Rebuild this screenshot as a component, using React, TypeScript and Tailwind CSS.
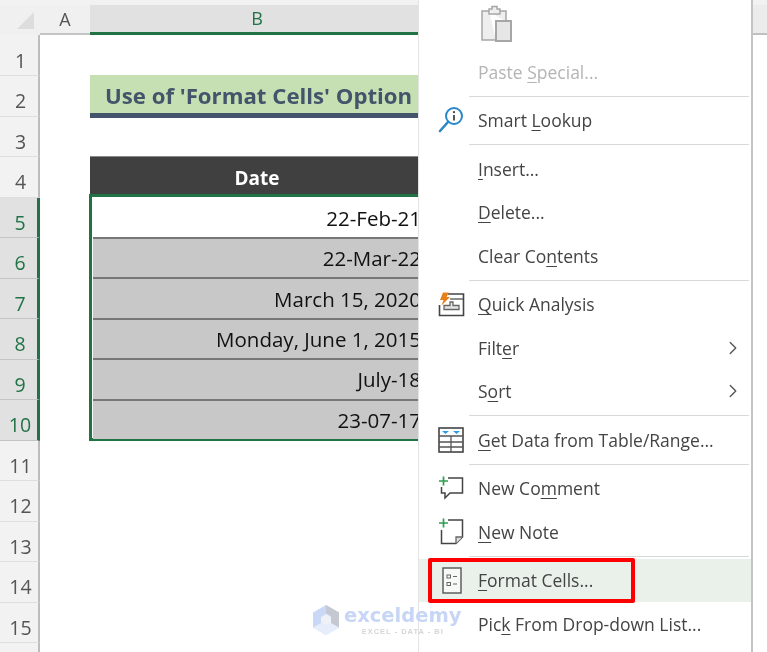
import React from "react";
import { ChevronRight } from "lucide-react";

const sans = "font-['Open_Sans','Noto_Sans',sans-serif]";

const Label = ({ text, u, className = "" }: { text: string; u: number; className?: string }) => (
  <span className={`whitespace-pre text-[17.5px] ${className}`}>
    {text.slice(0, u)}
    <u className="underline-offset-[3px]">{text[u]}</u>
    {text.slice(u + 1)}
  </span>
);

const PasteIcon = () => (
  <svg width="34" height="38" viewBox="0 0 34 38" fill="none" stroke="#a6a6a6" strokeWidth="1.5">
    <path d="M9 6H2v29h14" fill="#eeeeee" />
    <path d="M9 6V4h3V1.5h5V4h3v2h6v11" fill="#eeeeee" />
    <rect x="16" y="16" width="15" height="20" fill="#e6e6e6" strokeWidth="2" />
    <path d="M9 6v3h11V6" />
  </svg>
);

const LookupIcon = () => (
  <svg width="26" height="28" viewBox="0 0 26 28" fill="none">
    <circle cx="16" cy="10" r="8" stroke="#2b88c8" strokeWidth="2" />
    <path d="M10 16L2 25" stroke="#2b88c8" strokeWidth="2.6" strokeLinecap="round" />
    <path d="M16 9v5.5" stroke="#444" strokeWidth="1.8" />
    <circle cx="16" cy="6.2" r="1.1" fill="#444" />
  </svg>
);

const QuickIcon = () => (
  <svg width="27" height="25" viewBox="0 0 27 25" fill="none">
    <path d="M10 2h15.500v21.500H1.500V13" stroke="#444" strokeWidth="1.600" />
    <path d="M12 7h13" stroke="#444" strokeWidth="1.200" />
    <path d="M6 17.500h15v-4h-6v-3.500h-3v3.500H6z" stroke="#666" strokeWidth="1.300" fill="#e6e6e6" />
    <path d="M5 0.500h6L8.500 5H12L3.500 13.500 5.500 8H2z" fill="#e8801a" />
  </svg>
);

const TableIcon = () => (
  <svg width="26" height="26" viewBox="0 0 26 26" fill="none">
    <rect x="1" y="1" width="24" height="24" stroke="#444" strokeWidth="1.600" />
    <path d="M1 9h24M1 15h24M1 20h24M13 9v16" stroke="#555" strokeWidth="1.300" />
    <path d="M4 4h7l-3.500 3zM15 4h7l-3.500 3z" fill="#2e9ce6" />
  </svg>
);

const CommentIcon = () => (
  <svg width="26" height="25" viewBox="0 0 26 25" fill="none">
    <path d="M10 2h14.500v15H12l-5 5v-5H3.500v-6" stroke="#444" strokeWidth="1.500" />
    <path d="M5.500 0.500v9M1 5h9" stroke="#2f9e4f" strokeWidth="1.700" />
  </svg>
);

const NoteIcon = () => (
  <svg width="26" height="27" viewBox="0 0 26 27" fill="none">
    <path d="M10 2h14.500v17L18 25.500H3.500V12" stroke="#444" strokeWidth="1.500" />
    <path d="M24.500 19H18v6.500" stroke="#666" strokeWidth="1.300" fill="#ddd" />
    <path d="M5.500 0.500v9M1 5h9" stroke="#2f9e4f" strokeWidth="1.700" />
  </svg>
);

const FormatIcon = () => (
  <svg width="20" height="27" viewBox="0 0 20 27" fill="none">
    <rect x="1" y="1" width="18" height="25" stroke="#555" strokeWidth="1.400" fill="#f7f9f7" />
    <rect x="5" y="8" width="3.500" height="3" stroke="#666" />
    <rect x="5" y="15.500" width="3.500" height="3" stroke="#666" />
    <path d="M11 9.500h4M11 17h4" stroke="#666" strokeWidth="1.200" />
  </svg>
);

const Item = ({
  text,
  u,
  icon,
  arrow,
}: {
  text: string;
  u: number;
  icon?: React.ReactNode;
  arrow?: boolean;
}) => (
  <div className="flex h-[43.5px] items-center pl-[19px] pr-[7px] text-[#444444]">
    <div className="flex w-[40px] shrink-0 items-center">{icon}</div>
    <Label text={text} u={u} />
    {arrow && <ChevronRight className="ml-auto h-[22px] w-[22px] text-[#555555]" strokeWidth={1.5} />}
  </div>
);

const Sep = () => <div className="my-[2px] ml-[50px] mr-[2px] h-px bg-[#d8d8d8]" />;

const ContextMenu = () => (
  <div className={`absolute bottom-0 left-[418px] top-0 w-[335px] border-l border-r-2 border-l-[#e4e4e4] border-r-[#c4c4c4] bg-white ${sans}`}>
    <div className="flex h-[50px] items-end pb-[7px] pl-[61px]">
      <PasteIcon />
    </div>
    <div className="flex h-[43.500px] items-center pl-[59px] text-[#b4b4b4]">
      <Label text="Paste Special..." u={6} />
    </div>
    <Sep />
    <Item text="Smart Lookup" u={6} icon={<LookupIcon />} />
    <Sep />
    <Item text="Insert..." u={0} />
    <Item text="Delete..." u={0} />
    <Item text="Clear Contents" u={8} />
    <Sep />
    <Item text="Quick Analysis" u={0} icon={<QuickIcon />} />
    <Item text="Filter" u={4} arrow />
    <Item text="Sort" u={1} arrow />
    <Sep />
    <Item text="Get Data from Table/Range..." u={0} icon={<TableIcon />} />
    <Sep />
    <Item text="New Comment" u={6} icon={<CommentIcon />} />
    <Item text="New Note" u={0} icon={<NoteIcon />} />
    <Sep />
    <div className="relative bg-[#e9f1ea]">
      <Item text="Format Cells..." u={0} icon={<div className="pl-[4px]"><FormatIcon /></div>} />
      <div className="absolute -bottom-px -top-px left-[9px] w-[207px] rounded-[2px] border-4 border-[#ff0000]" />
    </div>
    <Item text="Pick From Drop-down List..." u={3} />
  </div>
);

const Watermark = () => (
  <div className="absolute left-[312px] top-[604px] flex items-start gap-[4px]">
    <svg width="28" height="32" viewBox="0 0 28 32">
      <path d="M14 1L27 8.500V23.500L14 31L1 23.500V8.500Z" fill="#c9d8f6" />
      <path d="M14 1L27 8.500V23.500L19 19V12L14 9Z" fill="#c4c8d0" />
      <path d="M1 23.500L14 31L27 23.500L19 19L14 22L9 19Z" fill="#e6edfb" />
      <path d="M9 13L14 10L19 13V19L14 22L9 19Z" fill="#eef1f6" />
    </svg>
    <div className="flex flex-col items-center">
      <span className="font-['DejaVu_Sans',sans-serif] text-[19.500px] font-bold leading-[24px] text-[#c7d6f6]">
        exceldemy
      </span>
      <span className="font-['Liberation_Sans',sans-serif] text-[7.500px] font-bold leading-[8px] tracking-[1px] text-[#d6d6d6]">
        EXCEL - DATA - BI
      </span>
    </div>
  </div>
);

const rowNums = [
  { n: "1", h: "h-[41px] pt-[12px]" },
  { n: "2", h: "h-[40.500px] pt-[11px]" },
  { n: "3", h: "h-[40.500px] pt-[11px]" },
  { n: "4", h: "h-[40.500px] pt-[11px]" },
  { n: "5", h: "h-[40.500px] pt-[11px]", sel: true },
  { n: "6", h: "h-[40.500px] pt-[11px]", sel: true },
  { n: "7", h: "h-[40.500px] pt-[11px]", sel: true },
  { n: "8", h: "h-[40.500px] pt-[11px]", sel: true },
  { n: "9", h: "h-[40.500px] pt-[11px]", sel: true },
  { n: "10", h: "h-[40.500px] pt-[11px]", sel: true },
  { n: "11", h: "h-[40.500px] pt-[11px]" },
  { n: "12", h: "h-[40.500px] pt-[11px]" },
  { n: "13", h: "h-[40.500px] pt-[11px]" },
  { n: "14", h: "h-[40.500px] pt-[11px]" },
  { n: "15", h: "h-[40.500px] pt-[11px]" },
  { n: "", h: "h-[40.500px]" },
];

const dates = ["22-Mar-22", "March 15, 2020", "Monday, June 1, 2015", "July-18", "23-07-17"];

export default function App() {
  return (
    <div className={`relative h-[652px] w-[767px] overflow-hidden bg-white blur-[0.45px] ${sans}`}>
      <div className="h-[5px] bg-[#f2f2f2]" />
      {/* column headers */}
      <div className="flex h-[30px] bg-[#eaeaea] text-[18px]">
        <div className="w-[40px] bg-[#f0f0f0] pl-[16px] pt-[6px]">
          <svg width="19" height="19" viewBox="0 0 19 19">
            <path d="M18 1V18H1Z" fill="#dddddd" />
          </svg>
        </div>
        <div className="flex w-[50px] items-center justify-center border-b-2 border-[#c4c4c4] bg-[#f0f0f0] text-[#555555]">A</div>
        <div className="flex w-[334px] items-center justify-center border-b-[3px] border-[#217346] bg-[#e1e1e1] text-[#217346]">B</div>
        <div className="flex-1 border-b-2 border-[#c0c0c0] bg-[#ececec]" />
      </div>
      <div className="flex">
        {/* row numbers */}
        <div className="flex w-[40px] flex-col text-[19.500px] leading-[28px]">
          {rowNums.map((r, i) => (
            <div
              key={i}
              className={`${r.h} shrink-0 border-b pl-[3px] text-center ${
                r.sel
                  ? "border-r-[3px] border-b-[#c4c4c4] border-r-[#217346] bg-[#e1e1e1] text-[#217346]"
                  : "border-r-2 border-b-[#dedede] border-r-[#bdbdbd] bg-[#f2f2f2] text-[#555555]"
              }`}
            >
              {r.n}
            </div>
          ))}
        </div>
        <div className="w-[50px]" />
        {/* column B */}
        <div className="flex w-[334px] flex-col">
          <div className="h-[40px]" />
          <div className="flex h-[43px] items-center border-b-[5px] border-[#44546a] bg-[#c6e0b4] pl-[15px] pt-[4px] text-[22.200px] font-bold leading-none text-[#44546a]">
            <span className="whitespace-pre">Use of 'Format Cells' Option</span>
          </div>
          <div className="h-[38px]" />
          <div className="flex h-[38px] items-center justify-center border-t border-[#888888] bg-[#404040] pt-[6px] text-[19px] font-bold text-[#ffffff]">
            Date
          </div>
          <div className="-ml-px h-[247px] border-[3px] border-[#217346] bg-white pb-[2px] pl-[1px]">
            <div className="flex h-[40px] items-center justify-end pt-[2px] text-[20.500px] text-[#111111]">22-Feb-21</div>
            {dates.map((d) => (
              <div
                key={d}
                className="flex h-[40.400px] items-center justify-end border-t-2 border-[#777777] bg-[#c8c8c8] pt-[1px] text-[20.500px] text-[#111111]"
              >
                {d}
              </div>
            ))}
          </div>
        </div>
      </div>
      <ContextMenu />
      <Watermark />
    </div>
  );
}
